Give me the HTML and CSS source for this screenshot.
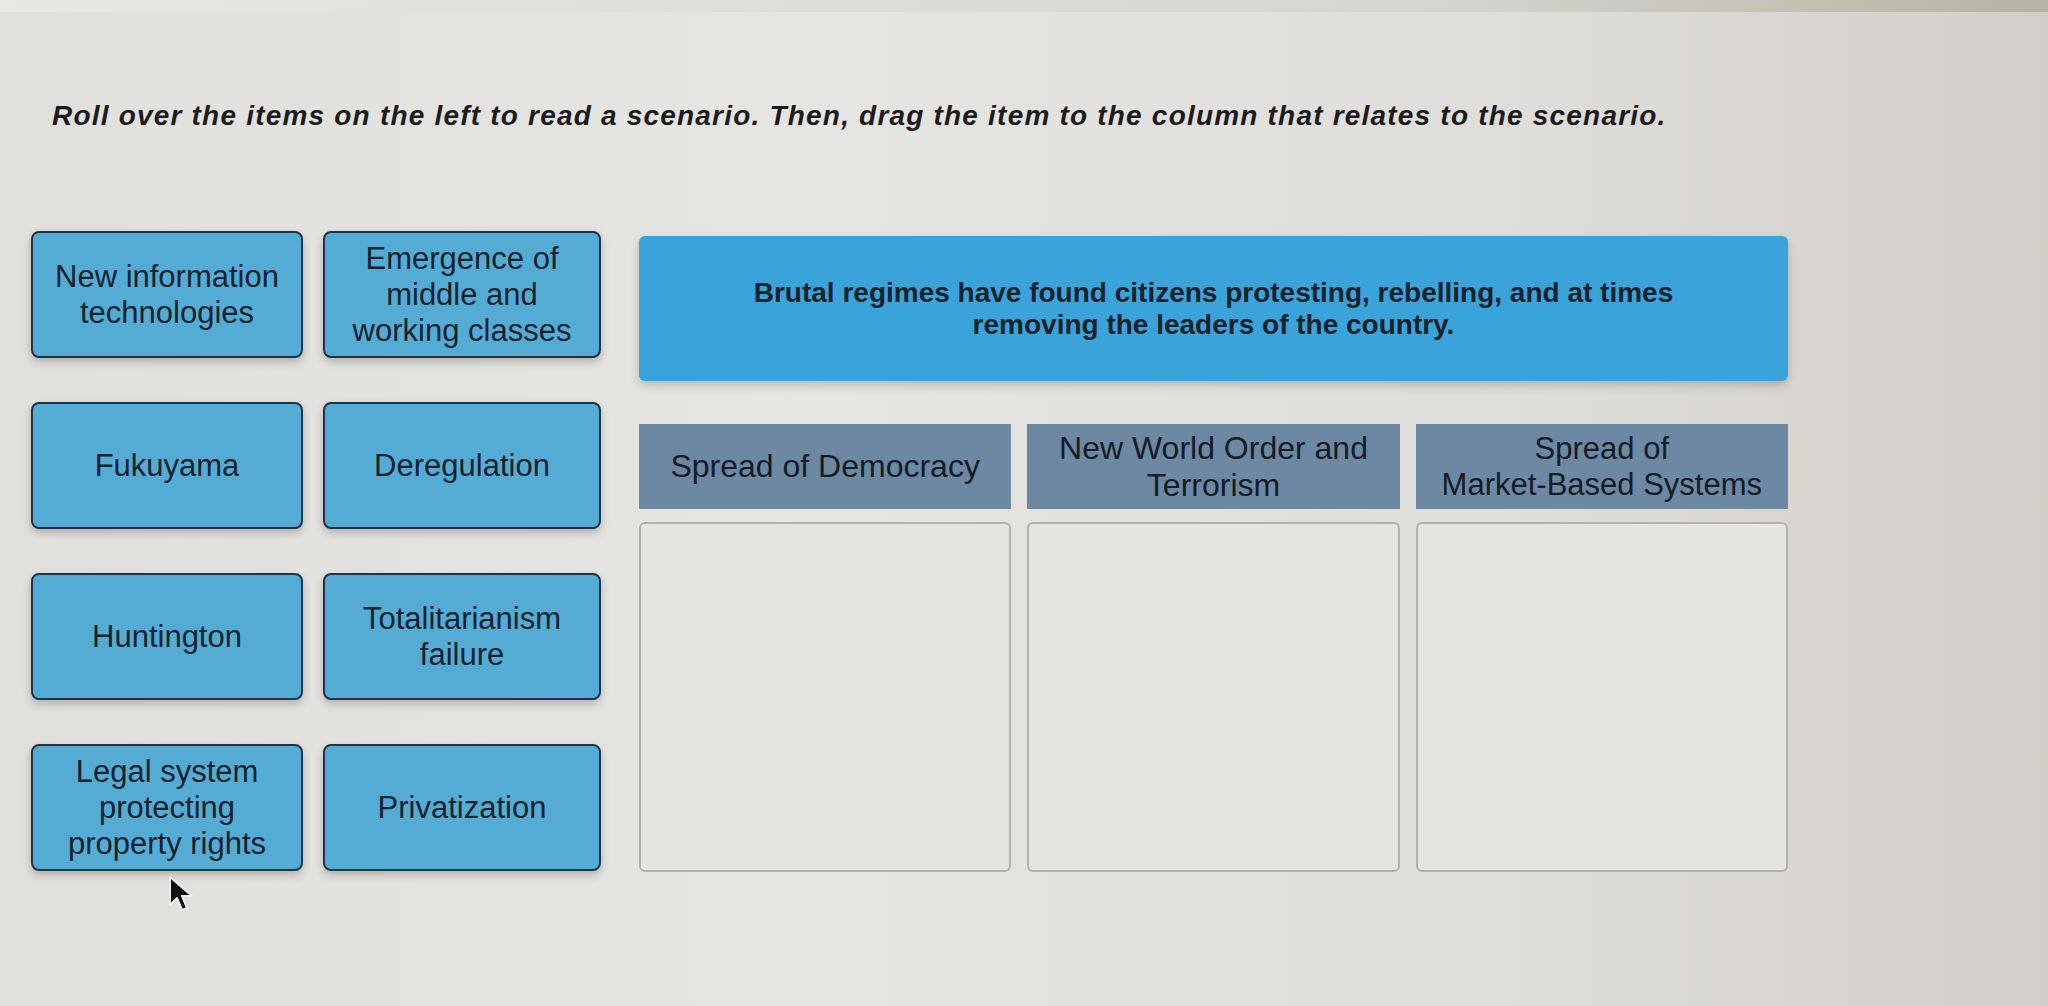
FILE: index.html
```html
<!DOCTYPE html>
<html lang="en">
<head>
  <meta charset="UTF-8" />
  <title>Drag and Drop Activity</title>
  <link rel="stylesheet" href="styles.css">
</head>
<body>
  <div class="topbar"></div>

  <p class="prompt">Roll over the items on the left to read a scenario. Then, drag the item to the column that relates to the scenario.</p>

  <main class="activity">
    <!-- draggable items -->
    <section class="items">
      <div class="item">New information technologies</div>
      <div class="item">Emergence of middle and working classes</div>
      <div class="item">Fukuyama</div>
      <div class="item">Deregulation</div>
      <div class="item">Huntington</div>
      <div class="item">Totalitarianism failure</div>
      <div class="item">Legal system protecting property rights</div>
      <div class="item">Privatization</div>
    </section>

    <section class="board">
      <div class="scenario">Brutal regimes have found citizens protesting, rebelling, and at times removing the leaders of the country.</div>

      <div class="columns">
        <div class="column">
          <div class="col-head">Spread of Democracy</div>
          <div class="drop"></div>
        </div>
        <div class="column">
          <div class="col-head">New World Order and Terrorism</div>
          <div class="drop"></div>
        </div>
        <div class="column">
          <div class="col-head tight">Spread of<br>Market-Based Systems</div>
          <div class="drop"></div>
        </div>
      </div>
    </section>
  </main>

  <!-- mouse pointer -->
  <svg class="cursor" width="26" height="38" viewBox="0 0 26 38">
    <path d="M2 2 L2 30 L9 23 L14 35 L19 33 L14 21 L24 21 Z" fill="#111" stroke="#eee" stroke-width="2" stroke-linejoin="round"/>
  </svg>
</body>
</html>
```

FILE: styles.css
```css
body {
  margin: 0;
  min-height: 1006px;
  font-family: 'Liberation Sans', Arial, sans-serif;
  color: #17222c;
  background: linear-gradient(90deg, #e1e0dd 0%, #e6e5e2 40%, #dfddd9 75%, #d2cfc9 100%);
  position: relative;
  overflow: hidden;
}
.topbar {
  height: 12px;
  background: linear-gradient(90deg, #e8e7e4 0%, #d6d5cf 70%, #b6b4a2 100%);
}
.prompt {
  margin: 88px 0 0 52px;
  font-size: 28px;
  font-weight: bold;
  font-style: italic;
  letter-spacing: 1.2px;
  color: #1c1c1c;
}
.activity {
  display: flex;
  align-items: flex-start;
  gap: 38px;
  margin: 99px 0 0 31px;
}
.items {
  display: grid;
  grid-template-columns: 272px 278px;
  grid-auto-rows: 127px;
  column-gap: 20px;
  row-gap: 44px;
}
.item {
  display: flex;
  align-items: center;
  justify-content: center;
  text-align: center;
  padding: 0 10px;
  font-size: 31px;
  line-height: 36px;
  background-color: #54acd5;
  border: 2px solid #1d3446;
  border-radius: 8px;
  box-shadow: 0 4px 8px rgba(0,0,0,0.22);
}
.board {
  width: 1149px;
  margin-top: 5px;
}
.scenario {
  height: 145px;
  display: flex;
  align-items: center;
  justify-content: center;
  text-align: center;
  padding: 0 88px;
  font-size: 28px;
  font-weight: bold;
  line-height: 32px;
  background-color: #3aa3da;
  border-radius: 6px;
  box-shadow: 0 4px 10px rgba(0,0,0,0.2);
  margin-bottom: 43px;
}
.columns {
  display: grid;
  grid-template-columns: repeat(3, 1fr);
  gap: 16px;
}
.col-head {
  height: 85px;
  display: flex;
  align-items: center;
  justify-content: center;
  text-align: center;
  font-size: 32px;
  line-height: 37px;
  background-color: #6c88a2;
  color: #141c24;
  margin-bottom: 13px;
}
.col-head.tight {
  font-size: 31px;
  line-height: 36px;
}
.drop {
  height: 346px;
  border: 2px solid #b4b1ab;
  border-radius: 6px;
  background-color: #e6e4e0;
}
.cursor {
  position: absolute;
  left: 168px;
  top: 875px;
}
```
